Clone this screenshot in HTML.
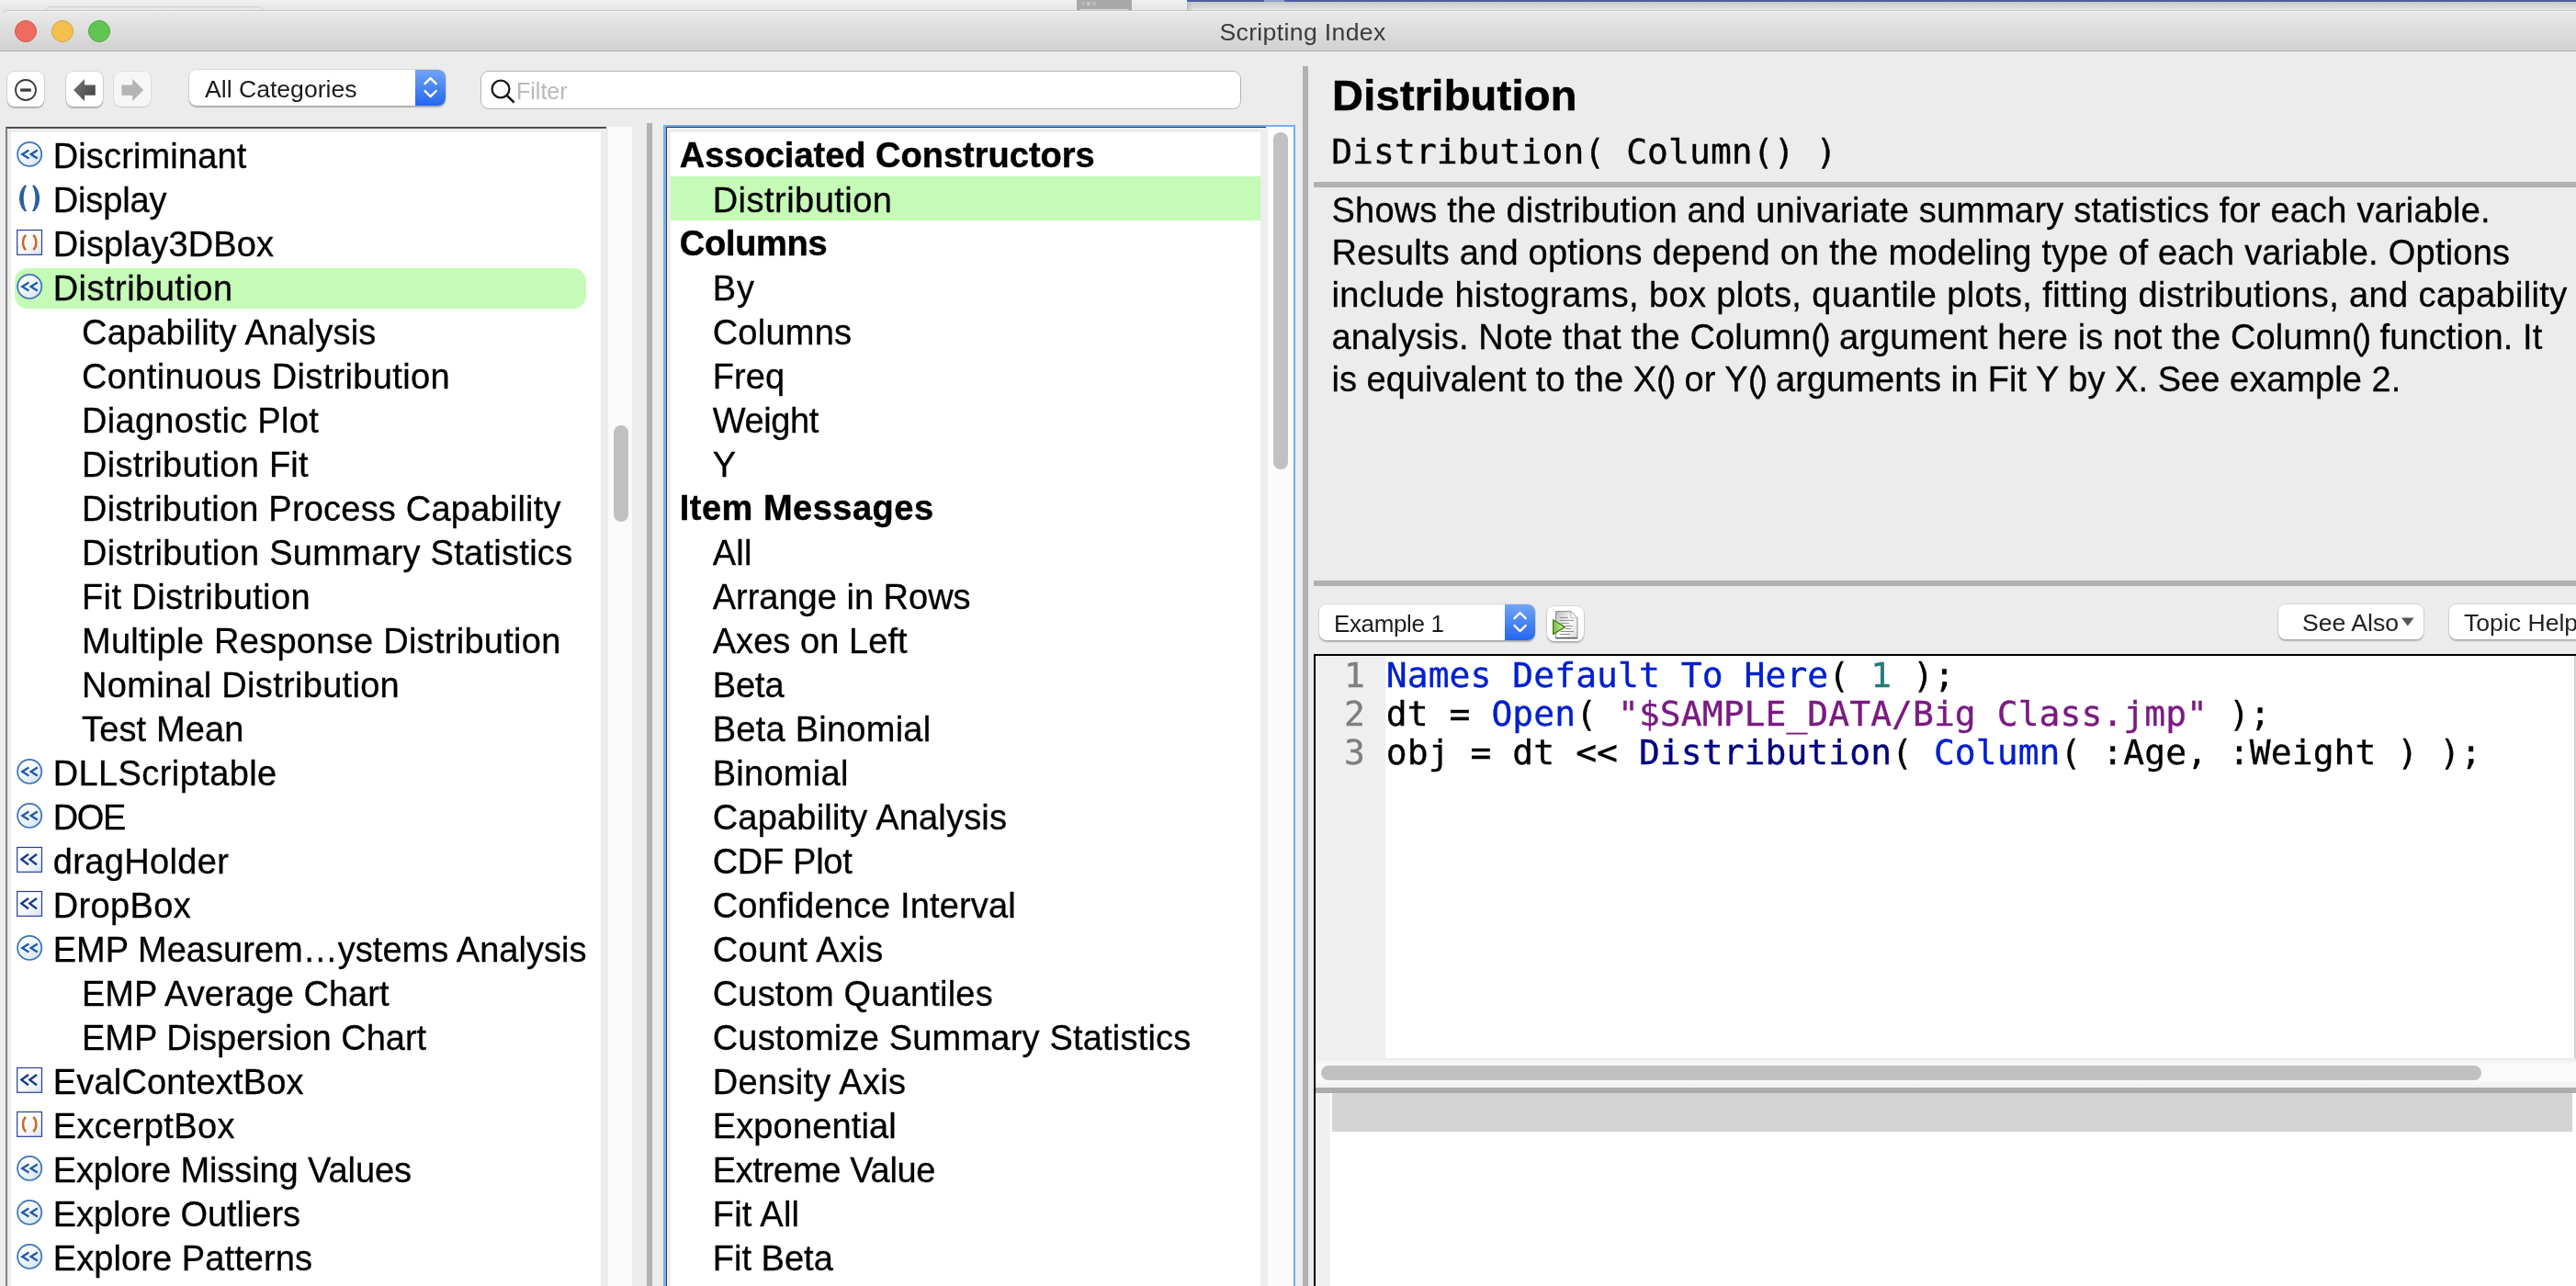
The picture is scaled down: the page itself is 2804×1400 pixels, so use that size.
<!DOCTYPE html>
<html lang="en"><head><meta charset="utf-8"><title>Scripting Index</title>
<style>
html,body{margin:0;padding:0}
body{width:2804px;height:1400px;overflow:hidden;background:#ececec;position:relative;font-family:"Liberation Sans",sans-serif;color:#000;will-change:transform}
div,span{box-sizing:border-box}
.a{position:absolute}
#top{left:0;top:0;width:2804px;height:13px;background:linear-gradient(#f0f0f0,#e4e4e4)}
#tab{left:49px;top:7px;width:238px;height:8px;border:1px solid #cfcfcf;border-bottom:none;border-radius:6px 6px 0 0;background:#e9e9e9}
#gblk{left:1172px;top:0;width:60px;height:11px;background:#a9a9a9}
#blue{left:1292px;top:0;width:1512px;height:11px;background:linear-gradient(#4a62a0 0,#4a62a0 2px,#c9c9c9 2.5px,#e6e6e6 100%)}
#tb{left:0;top:12px;width:2804px;height:44px;background:linear-gradient(#e9e9e9,#d1d1d1);border-top:1px solid #f4f4f4;border-bottom:1px solid #adadad;border-radius:10px 0 0 0;box-shadow:0 -1px 0 #c4c4c4}
.tl{width:24px;height:24px;border-radius:50%;top:22px}
#title{left:1218px;top:19.8px;width:400px;text-align:center;font-size:26.6px;line-height:30px;color:#3c3c3c;letter-spacing:.35px}
.btn{background:#fff;border-radius:8px;box-shadow:0 0 0 1px rgba(0,0,0,.09),0 1.5px 1.5px rgba(0,0,0,.22)}
.sel{background:#fff;border-radius:8px;box-shadow:0 0 0 1px rgba(0,0,0,.08),0 1.5px 1.5px rgba(0,0,0,.24);font-size:26.6px;color:#1c1c1c}
.selb{right:0;top:0;bottom:0;background:linear-gradient(#72a4f6,#2367f1);border-radius:0 8px 8px 0}
.lb{background:#fff}
.row{position:absolute;left:0;right:0;height:48px;font-size:38px;line-height:48px;white-space:nowrap;letter-spacing:.25px;-webkit-text-stroke:.3px #000}
.row span.t{position:absolute;top:1px}
.ic{position:absolute;left:5px;top:8px}
.hl{background:#c5fbb6}
b,.bold{font-weight:bold}
.code{font-family:"DejaVu Sans Mono","Liberation Mono",monospace;font-size:38px;white-space:pre;-webkit-text-stroke:.35px}
.row.bold{-webkit-text-stroke:.45px #000}
</style></head><body>
<svg width="0" height="0" style="position:absolute"><defs>
<linearGradient id="gc" x1="0" y1="0" x2="1" y2="1"><stop offset="0" stop-color="#ffffff"/><stop offset=".45" stop-color="#f3f7fc"/><stop offset="1" stop-color="#cfdff2"/></linearGradient>
<linearGradient id="gb" x1="0" y1="0" x2="1" y2="1"><stop offset="0" stop-color="#ffffff"/><stop offset=".5" stop-color="#fbfcfe"/><stop offset="1" stop-color="#d6e2f2"/></linearGradient>
<linearGradient id="ga" x1="0" y1="0" x2="1" y2="1"><stop offset="0" stop-color="#7a7a7a"/><stop offset="1" stop-color="#3e3e3e"/></linearGradient>
<linearGradient id="gd" x1="0" y1="0" x2="1" y2="1"><stop offset="0" stop-color="#b9b9b9"/><stop offset=".5" stop-color="#ffffff"/><stop offset="1" stop-color="#d8d8d8"/></linearGradient>
<linearGradient id="gg" x1="0" y1="0" x2="1" y2="0"><stop offset="0" stop-color="#7fb84a"/><stop offset=".7" stop-color="#b2ea84"/><stop offset="1" stop-color="#8fcf5a"/></linearGradient>
</defs></svg>

<div class="a" id="top"></div><div class="a" id="tab"></div><div class="a" id="gblk"></div><div class="a" id="blue"></div>
<div class="a" style="left:1177px;top:2px;width:4px;height:4px;background:#b9b9b9"></div><div class="a" style="left:1183px;top:2px;width:4px;height:4px;background:#c4c4c4"></div><div class="a" style="left:1189px;top:2px;width:4px;height:4px;background:#b9b9b9"></div><div class="a" style="left:1176px;top:10px;width:52px;height:2px;background:#dcdcdc"></div>
<div class="a" style="left:1376px;top:0;width:22px;height:2px;background:#8fa2c6"></div><div class="a" style="left:1292px;top:2px;width:6px;height:9px;background:linear-gradient(90deg,#bdbdbd,rgba(200,200,200,0))"></div>
<div class="a" id="tb"></div>
<div class="a tl" style="left:16px;background:#ed6b5f;border:1px solid #d5574c"></div>
<div class="a tl" style="left:56px;background:#f5bf4f;border:1px solid #d9a33c"></div>
<div class="a tl" style="left:96px;background:#61c554;border:1px solid #4fa83f"></div>
<div class="a" id="title">Scripting Index</div>
<div class="a btn" style="left:8px;top:78px;width:40px;height:38px"><svg class="a" style="left:7px;top:7px" width="26" height="26" viewBox="0 0 26 26"><circle cx="13" cy="13" r="11" fill="none" stroke="#3a3a3a" stroke-width="1.8"/><rect x="7.2" y="11.4" width="11.6" height="3.3" fill="#3a3a3a"/></svg></div>
<div class="a btn" style="left:72px;top:78px;width:40px;height:38px"><svg class="a" style="left:0;top:0" width="40" height="38" viewBox="0 0 40 38"><path d="M8 20 L20 8 L20 14.4 L31.8 14.4 L31.8 25.8 L20 25.8 L20 32 Z" fill="url(#ga)"/></svg></div>
<div class="a btn" style="left:124px;top:78px;width:40px;height:38px;background:#f6f6f6;box-shadow:0 0 0 1px rgba(0,0,0,.06),0 1px 1px rgba(0,0,0,.1)"><svg class="a" style="left:0;top:0" width="40" height="38" viewBox="0 0 40 38"><path d="M32.2 20 L20.2 8 L20.2 14.4 L8.4 14.4 L8.4 25.8 L20.2 25.8 L20.2 32 Z" fill="#b4b4b4"/></svg></div>
<div class="a sel" style="left:206px;top:75.5px;width:279px;height:39px"><span class="a" style="left:17px;top:6.5px;line-height:30px">All Categories</span><div class="a selb" style="width:33px"><svg class="a" style="left:0;top:.5px" width="33" height="38" viewBox="0 0 33 38"><path d="M10.5 15.2 L16.6 9.1 L22.7 15.2 M10.5 23 L16.6 29.1 L22.7 23" fill="none" stroke="#fff" stroke-width="2.4" stroke-linecap="round" stroke-linejoin="round"/></svg></div></div>
<div class="a" style="left:523px;top:77px;width:828px;height:42px;background:#fff;border:1px solid #b4b4b4;border-radius:9px"><svg class="a" style="left:8px;top:6px" width="32" height="32" viewBox="0 0 32 32"><circle cx="13" cy="13" r="9.4" fill="none" stroke="#1a1a1a" stroke-width="2.3"/><path d="M19.6 19.8 L27.6 27.6" stroke="#1a1a1a" stroke-width="2.6"/></svg><span class="a" style="left:38px;top:6px;font-size:25px;line-height:30px;color:#b9b9b9">Filter</span></div>
<div class="a" style="left:6px;top:138px;width:654px;height:1270px;border-top:2px solid #4e4e4e;border-left:2px solid #828282;background:#ededed"></div>
<div class="a" style="left:662px;top:138px;width:26px;height:1270px;background:#fafafa"></div>
<div class="a" style="left:668px;top:463px;width:16px;height:105px;border-radius:8px;background:#c1c1c1"></div>
<div class="a lb" style="left:12px;top:144px;width:642px;height:1260px;overflow:hidden">
<div class="row" style="top:1px"><svg class="ic" width="30" height="30" viewBox="0 0 30 30"><circle cx="15.2" cy="14.9" r="13.1" fill="url(#gc)" stroke="#3b74b9" stroke-width="1.7"/><path d="M14.4 10.4 L7.2 14.9 L14.4 19.4 M23.8 10.4 L16.6 14.9 L23.8 19.4" fill="none" stroke="#1f5aa6" stroke-width="2.3" stroke-linejoin="miter"/></svg><span class="t" style="left:45.7px;letter-spacing:0.149px">Discriminant</span></div>
<div class="row" style="top:49px"><svg class="ic" width="30" height="30" viewBox="0 0 30 30"><path d="M9.6 0.8 C2.2 8 2.2 21.8 9.6 29 L12.2 29 C7.6 21.5 7.6 8.3 12.2 0.8 Z M20.6 0.8 C28 8 28 21.8 20.6 29 L18 29 C22.6 21.5 22.6 8.3 18 0.8 Z" fill="#2a5fa4"/></svg><span class="t" style="left:45.7px;letter-spacing:-0.134px">Display</span></div>
<div class="row" style="top:97px"><svg class="ic" width="30" height="30" viewBox="0 0 30 30"><rect x="1.7" y="1.5" width="26.8" height="26.8" fill="url(#gb)" stroke="#27418f" stroke-width="1.2"/><path d="M11 6.8 C7 11 7 19 11 23.2 M19.4 6.8 C23.4 11 23.4 19 19.4 23.2" fill="none" stroke="#c8691e" stroke-width="2.4"/></svg><span class="t" style="left:45.7px;letter-spacing:0.159px">Display3DBox</span></div>
<div class="a hl" style="left:4px;top:148px;width:622px;height:44px;border-radius:14px"></div>
<div class="row" style="top:145px"><svg class="ic" width="30" height="30" viewBox="0 0 30 30"><circle cx="15.2" cy="14.9" r="13.1" fill="url(#gc)" stroke="#3b74b9" stroke-width="1.7"/><path d="M14.4 10.4 L7.2 14.9 L14.4 19.4 M23.8 10.4 L16.6 14.9 L23.8 19.4" fill="none" stroke="#1f5aa6" stroke-width="2.3" stroke-linejoin="miter"/></svg><span class="t" style="left:45.7px;letter-spacing:0.483px">Distribution</span></div>
<div class="row" style="top:193px"><span class="t" style="left:77px;letter-spacing:0.192px">Capability Analysis</span></div>
<div class="row" style="top:241px"><span class="t" style="left:77px;letter-spacing:0.353px">Continuous Distribution</span></div>
<div class="row" style="top:289px"><span class="t" style="left:77px;letter-spacing:0.305px">Diagnostic Plot</span></div>
<div class="row" style="top:337px"><span class="t" style="left:77px;letter-spacing:0.250px">Distribution Fit</span></div>
<div class="row" style="top:385px"><span class="t" style="left:77px;letter-spacing:0.207px">Distribution Process Capability</span></div>
<div class="row" style="top:433px"><span class="t" style="left:77px;letter-spacing:0.278px">Distribution Summary Statistics</span></div>
<div class="row" style="top:481px"><span class="t" style="left:77px;letter-spacing:0.383px">Fit Distribution</span></div>
<div class="row" style="top:529px"><span class="t" style="left:77px;letter-spacing:0.278px">Multiple Response Distribution</span></div>
<div class="row" style="top:577px"><span class="t" style="left:77px;letter-spacing:0.302px">Nominal Distribution</span></div>
<div class="row" style="top:625px"><span class="t" style="left:77px;letter-spacing:0.150px">Test Mean</span></div>
<div class="row" style="top:673px"><svg class="ic" width="30" height="30" viewBox="0 0 30 30"><circle cx="15.2" cy="14.9" r="13.1" fill="url(#gc)" stroke="#3b74b9" stroke-width="1.7"/><path d="M14.4 10.4 L7.2 14.9 L14.4 19.4 M23.8 10.4 L16.6 14.9 L23.8 19.4" fill="none" stroke="#1f5aa6" stroke-width="2.3" stroke-linejoin="miter"/></svg><span class="t" style="left:45.7px;letter-spacing:0.402px">DLLScriptable</span></div>
<div class="row" style="top:721px"><svg class="ic" width="30" height="30" viewBox="0 0 30 30"><circle cx="15.2" cy="14.9" r="13.1" fill="url(#gc)" stroke="#3b74b9" stroke-width="1.7"/><path d="M14.4 10.4 L7.2 14.9 L14.4 19.4 M23.8 10.4 L16.6 14.9 L23.8 19.4" fill="none" stroke="#1f5aa6" stroke-width="2.3" stroke-linejoin="miter"/></svg><span class="t" style="left:45.7px;letter-spacing:-1.400px">DOE</span></div>
<div class="row" style="top:769px"><svg class="ic" width="30" height="30" viewBox="0 0 30 30"><rect x="1.7" y="1.5" width="26.8" height="26.8" fill="url(#gb)" stroke="#27418f" stroke-width="1.2"/><path d="M14 9 L6.4 14.6 L14 20.2 M23 9 L15.4 14.6 L23 20.2" fill="none" stroke="#163a8a" stroke-width="2.4"/></svg><span class="t" style="left:45.7px;letter-spacing:0.349px">dragHolder</span></div>
<div class="row" style="top:817px"><svg class="ic" width="30" height="30" viewBox="0 0 30 30"><rect x="1.7" y="1.5" width="26.8" height="26.8" fill="url(#gb)" stroke="#27418f" stroke-width="1.2"/><path d="M14 9 L6.4 14.6 L14 20.2 M23 9 L15.4 14.6 L23 20.2" fill="none" stroke="#163a8a" stroke-width="2.4"/></svg><span class="t" style="left:45.7px;letter-spacing:0.382px">DropBox</span></div>
<div class="row" style="top:865px"><svg class="ic" width="30" height="30" viewBox="0 0 30 30"><circle cx="15.2" cy="14.9" r="13.1" fill="url(#gc)" stroke="#3b74b9" stroke-width="1.7"/><path d="M14.4 10.4 L7.2 14.9 L14.4 19.4 M23.8 10.4 L16.6 14.9 L23.8 19.4" fill="none" stroke="#1f5aa6" stroke-width="2.3" stroke-linejoin="miter"/></svg><span class="t" style="left:45.7px;letter-spacing:0.029px">EMP Measurem…ystems Analysis</span></div>
<div class="row" style="top:913px"><span class="t" style="left:77px;letter-spacing:0.000px">EMP Average Chart</span></div>
<div class="row" style="top:961px"><span class="t" style="left:77px;letter-spacing:-0.005px">EMP Dispersion Chart</span></div>
<div class="row" style="top:1009px"><svg class="ic" width="30" height="30" viewBox="0 0 30 30"><rect x="1.7" y="1.5" width="26.8" height="26.8" fill="url(#gb)" stroke="#27418f" stroke-width="1.2"/><path d="M14 9 L6.4 14.6 L14 20.2 M23 9 L15.4 14.6 L23 20.2" fill="none" stroke="#163a8a" stroke-width="2.4"/></svg><span class="t" style="left:45.7px;letter-spacing:0.197px">EvalContextBox</span></div>
<div class="row" style="top:1057px"><svg class="ic" width="30" height="30" viewBox="0 0 30 30"><rect x="1.7" y="1.5" width="26.8" height="26.8" fill="url(#gb)" stroke="#27418f" stroke-width="1.2"/><path d="M11 6.8 C7 11 7 19 11 23.2 M19.4 6.8 C23.4 11 23.4 19 19.4 23.2" fill="none" stroke="#c8691e" stroke-width="2.4"/></svg><span class="t" style="left:45.7px;letter-spacing:0.397px">ExcerptBox</span></div>
<div class="row" style="top:1105px"><svg class="ic" width="30" height="30" viewBox="0 0 30 30"><circle cx="15.2" cy="14.9" r="13.1" fill="url(#gc)" stroke="#3b74b9" stroke-width="1.7"/><path d="M14.4 10.4 L7.2 14.9 L14.4 19.4 M23.8 10.4 L16.6 14.9 L23.8 19.4" fill="none" stroke="#1f5aa6" stroke-width="2.3" stroke-linejoin="miter"/></svg><span class="t" style="left:45.7px;letter-spacing:-0.087px">Explore Missing Values</span></div>
<div class="row" style="top:1153px"><svg class="ic" width="30" height="30" viewBox="0 0 30 30"><circle cx="15.2" cy="14.9" r="13.1" fill="url(#gc)" stroke="#3b74b9" stroke-width="1.7"/><path d="M14.4 10.4 L7.2 14.9 L14.4 19.4 M23.8 10.4 L16.6 14.9 L23.8 19.4" fill="none" stroke="#1f5aa6" stroke-width="2.3" stroke-linejoin="miter"/></svg><span class="t" style="left:45.7px;letter-spacing:-0.068px">Explore Outliers</span></div>
<div class="row" style="top:1201px"><svg class="ic" width="30" height="30" viewBox="0 0 30 30"><circle cx="15.2" cy="14.9" r="13.1" fill="url(#gc)" stroke="#3b74b9" stroke-width="1.7"/><path d="M14.4 10.4 L7.2 14.9 L14.4 19.4 M23.8 10.4 L16.6 14.9 L23.8 19.4" fill="none" stroke="#1f5aa6" stroke-width="2.3" stroke-linejoin="miter"/></svg><span class="t" style="left:45.7px;letter-spacing:0.096px">Explore Patterns</span></div>
</div>
<div class="a" style="left:704px;top:134px;width:6px;height:1270px;background:#b1b1b1"></div>
<div class="a" style="left:722px;top:136px;width:688px;height:1270px;background:#74b0f3"></div>
<div class="a" style="left:725px;top:138.4px;width:683px;height:1270px;background:#fbfbfb"></div>
<div class="a" style="left:725px;top:138.4px;width:655px;height:1270px;background:#ededed"></div>
<div class="a" style="left:725px;top:138.4px;width:653px;height:1270px;border-top:1.7px solid #2e2e2e;border-left:1.2px solid #3e3e3e;background:#ededed"></div>
<div class="a" style="left:1386px;top:144px;width:16px;height:367px;border-radius:8px;background:#c1c1c1"></div>
<div class="a lb" style="left:730px;top:144px;width:642px;height:1260px;overflow:hidden">
<div class="row bold" style="top:0px"><span class="t" style="left:9.8px;letter-spacing:0.000px">Associated Constructors</span></div>
<div class="a hl" style="left:0;top:48px;width:642px;height:48px"></div>
<div class="row" style="top:48px"><span class="t" style="left:45.7px;top:2.1px;letter-spacing:0.471px">Distribution</span></div>
<div class="row bold" style="top:96px"><span class="t" style="left:9.8px;letter-spacing:-0.283px">Columns</span></div>
<div class="row" style="top:144px"><span class="t" style="left:45.7px;top:2.1px;letter-spacing:0.850px">By</span></div>
<div class="row" style="top:192px"><span class="t" style="left:45.7px;top:2.1px;letter-spacing:0.235px">Columns</span></div>
<div class="row" style="top:240px"><span class="t" style="left:45.7px;top:2.1px;letter-spacing:0.084px">Freq</span></div>
<div class="row" style="top:288px"><span class="t" style="left:45.7px;top:2.1px;letter-spacing:-0.410px">Weight</span></div>
<div class="row" style="top:336px"><span class="t" style="left:45.7px;top:2.1px;letter-spacing:0.250px">Y</span></div>
<div class="row bold" style="top:384px"><span class="t" style="left:9.8px;letter-spacing:0.489px">Item Messages</span></div>
<div class="row" style="top:432px"><span class="t" style="left:45.7px;top:2.1px;letter-spacing:0.250px">All</span></div>
<div class="row" style="top:480px"><span class="t" style="left:45.7px;top:2.1px;letter-spacing:0.001px">Arrange in Rows</span></div>
<div class="row" style="top:528px"><span class="t" style="left:45.7px;top:2.1px;letter-spacing:0.058px">Axes on Left</span></div>
<div class="row" style="top:576px"><span class="t" style="left:45.7px;top:2.1px;letter-spacing:-0.048px">Beta</span></div>
<div class="row" style="top:624px"><span class="t" style="left:45.7px;top:2.1px;letter-spacing:0.250px">Beta Binomial</span></div>
<div class="row" style="top:672px"><span class="t" style="left:45.7px;top:2.1px;letter-spacing:0.275px">Binomial</span></div>
<div class="row" style="top:720px"><span class="t" style="left:45.7px;top:2.1px;letter-spacing:0.194px">Capability Analysis</span></div>
<div class="row" style="top:768px"><span class="t" style="left:45.7px;top:2.1px;letter-spacing:-0.305px">CDF Plot</span></div>
<div class="row" style="top:816px"><span class="t" style="left:45.7px;top:2.1px;letter-spacing:0.142px">Confidence Interval</span></div>
<div class="row" style="top:864px"><span class="t" style="left:45.7px;top:2.1px;letter-spacing:0.448px">Count Axis</span></div>
<div class="row" style="top:912px"><span class="t" style="left:45.7px;top:2.1px;letter-spacing:0.197px">Custom Quantiles</span></div>
<div class="row" style="top:960px"><span class="t" style="left:45.7px;top:2.1px;letter-spacing:0.200px">Customize Summary Statistics</span></div>
<div class="row" style="top:1008px"><span class="t" style="left:45.7px;top:2.1px;letter-spacing:0.311px">Density Axis</span></div>
<div class="row" style="top:1056px"><span class="t" style="left:45.7px;top:2.1px;letter-spacing:0.150px">Exponential</span></div>
<div class="row" style="top:1104px"><span class="t" style="left:45.7px;top:2.1px;letter-spacing:-0.299px">Extreme Value</span></div>
<div class="row" style="top:1152px"><span class="t" style="left:45.7px;top:2.1px;letter-spacing:0.235px">Fit All</span></div>
<div class="row" style="top:1200px"><span class="t" style="left:45.7px;top:2.1px;letter-spacing:0.023px">Fit Beta</span></div>
</div>
<div class="a" style="left:1418px;top:72px;width:6px;height:1330px;background:#b1b1b1"></div>
<div class="a bold" style="left:1450px;top:76px;font-size:47px;line-height:56px;letter-spacing:.25px;-webkit-text-stroke:.6px #000">Distribution</div>
<div class="a code" style="left:1449.2px;top:143px;line-height:44px;letter-spacing:.05px">Distribution( Column() )</div>
<div class="a" style="left:1430px;top:198px;width:1380px;height:6px;background:#b1b1b1"></div>
<div class="a" style="left:1449.5px;top:206px;font-size:38px;line-height:46px;white-space:nowrap;-webkit-text-stroke:.3px #000;letter-spacing:0.203px">Shows the distribution and univariate summary statistics for each variable.</div>
<div class="a" style="left:1449.5px;top:252px;font-size:38px;line-height:46px;white-space:nowrap;-webkit-text-stroke:.3px #000;letter-spacing:0.239px">Results and options depend on the modeling type of each variable. Options</div>
<div class="a" style="left:1449.5px;top:298px;font-size:38px;line-height:46px;white-space:nowrap;-webkit-text-stroke:.3px #000;letter-spacing:0.373px">include histograms, box plots, quantile plots, fitting distributions, and capability</div>
<div class="a" style="left:1449.5px;top:344px;font-size:38px;line-height:46px;white-space:nowrap;-webkit-text-stroke:.3px #000;letter-spacing:0.142px">analysis. Note that the Column<span style="letter-spacing:-3.86px">(</span><span style="letter-spacing:-1.46px">)</span> argument here is not the Column<span style="letter-spacing:-3.86px">(</span><span style="letter-spacing:-1.46px">)</span> function. It</div>
<div class="a" style="left:1449.5px;top:390px;font-size:38px;line-height:46px;white-space:nowrap;-webkit-text-stroke:.3px #000;letter-spacing:0.037px">is equivalent to the X<span style="letter-spacing:-3.96px">(</span><span style="letter-spacing:-1.56px">)</span> or Y<span style="letter-spacing:-3.96px">(</span><span style="letter-spacing:-1.56px">)</span> arguments in Fit Y by X. See example 2.</div>
<div class="a" style="left:1430px;top:632px;width:1380px;height:6px;background:#b1b1b1"></div>
<div class="a sel" style="left:1436px;top:657.5px;width:235px;height:39px"><span class="a" style="left:16px;top:6px;line-height:30px;font-size:26px;letter-spacing:-.37px">Example 1</span><div class="a selb" style="width:33px"><svg class="a" style="left:0;top:.5px" width="33" height="38" viewBox="0 0 33 38"><path d="M10.5 15.2 L16.6 9.1 L22.7 15.2 M10.5 23 L16.6 29.1 L22.7 23" fill="none" stroke="#fff" stroke-width="2.4" stroke-linecap="round" stroke-linejoin="round"/></svg></div></div>
<div class="a btn" style="left:1684px;top:660px;width:40px;height:38px"><svg class="a" style="left:0;top:0" width="40" height="38" viewBox="0 0 40 38"><path d="M9.6 5.6 L26 5.6 L33 12.8 L33 34.6 L9.6 34.6 Z" fill="url(#gd)" stroke="#8a8a8a" stroke-width="1"/><path d="M9.4 34.6 L33.2 34.6" stroke="#4a4a4a" stroke-width="1.4"/><path d="M26 5.6 L26 12.8 L33 12.8 Z" fill="#fff" stroke="#a5a5a5" stroke-width=".8"/><path d="M13.6 12.4 H23 M13.6 15.4 H29 M15 18.4 H24 M20 21.5 H28 M20 24.5 H26 M14.6 27.5 H29 M13.6 30.5 H25" stroke="#8c8c8c" stroke-width="1"/><path d="M6.6 14.8 L19.6 22.6 L6.6 30.4 Z" fill="url(#gg)" stroke="#4c7d1e" stroke-width="1.3" stroke-linejoin="round"/></svg></div>
<div class="a btn" style="left:2480px;top:658px;width:158px;height:38px;font-size:26.6px;color:#222"><span class="a" style="left:26px;top:5px;line-height:30px">See Also</span><svg class="a" style="left:134px;top:14px" width="14" height="10" viewBox="0 0 14 10"><path d="M0 0.4 L13.6 0.4 L6.8 9.4 Z" fill="#555"/></svg></div>
<div class="a btn" style="left:2666px;top:658px;width:170px;height:38px;font-size:26.6px;color:#222"><span class="a" style="left:16px;top:5px;line-height:30px">Topic Help</span></div>
<div class="a" style="left:1430px;top:712px;width:1380px;height:700px;background:#000"></div>
<div class="a" style="left:1432px;top:714px;width:1380px;height:438px;background:#fff"></div>
<div class="a" style="left:1432px;top:714px;width:76px;height:438px;background:#efefef"></div>
<div class="a" style="left:2802px;top:714px;width:2px;height:438px;background:#d0d0d0"></div>
<div class="a code" style="left:1463px;top:713.5px;line-height:42px;color:#7f7f7f">1
2
3</div>
<div class="a code" style="left:1508.8px;top:713.5px;line-height:42px;letter-spacing:.05px"><span style="color:#0020cc">Names Default To Here</span>( <span style="color:#267a7a">1</span> );
dt = <span style="color:#0020cc">Open</span>( <span style="color:#7a1a82">"$SAMPLE_DATA/Big Class.jmp"</span> );
obj = dt &lt;&lt; <span style="color:#000080">Distribution</span>( <span style="color:#0020cc">Column</span>( :Age, :Weight ) );</div>
<div class="a" style="left:1432px;top:1152px;width:1380px;height:32px;background:linear-gradient(#e8e8e8 0,#f3f3f3 3px,#fafafa 8px,#fafafa 24px,#efefef 100%)"></div>
<div class="a" style="left:1438px;top:1160px;width:1263px;height:16px;border-radius:8px;background:#c1c1c1"></div>
<div class="a" style="left:1432px;top:1184px;width:1380px;height:6px;background:#adadad"></div>
<div class="a" style="left:1432px;top:1190px;width:1380px;height:220px;background:#fff"></div>
<div class="a" style="left:1432px;top:1190px;width:16px;height:220px;background:#f0f0f0"></div>
<div class="a" style="left:1450px;top:1190px;width:1350px;height:42px;background:#d4d4d4"></div>
</body></html>
